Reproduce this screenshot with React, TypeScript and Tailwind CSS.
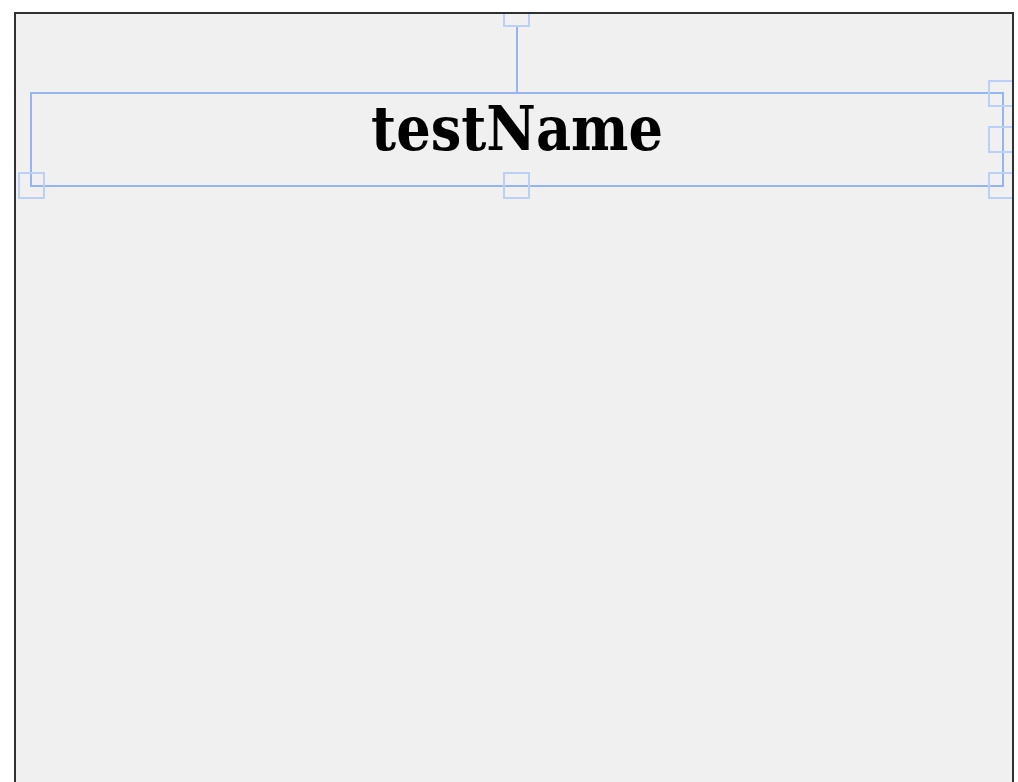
/* App.tsx — canvas with a selected heading */

const handle = 'w-[27px] h-[27px] border-2 border-[#bccff7]';

export default function App() {
  return (
    <div className="min-h-[782px] bg-white pt-[12px] pl-[14px]">
      <div className="w-[1000px] h-[800px] overflow-hidden border-2 border-[#2e3033] bg-[#f0f0f0]">
        <div className="relative ml-[14px] mt-[78px] w-[974px] h-[95px] flex justify-center">
          <h1
            className="mt-[1px] text-[61px] leading-[72px] font-bold text-black scale-x-[0.89]"
            style={{ fontFamily: '"DejaVu Serif", serif' }}
          >
            testName
          </h1>

          {/* selection outline */}
          <div className="absolute inset-0 border-2 border-[#94b4f6]" />

          {/* top rotate handle + stem */}
          <div className="absolute left-[473px] top-[-92px] flex flex-col items-center">
            <div className={handle} />
            <div className="w-[2px] h-[65px] bg-[#94b4f6] -mt-[27px] translate-y-[27px]" />
          </div>

          {/* bottom handles */}
          <div className="absolute left-[-12px] top-[80px] flex gap-[458px]">
            <div className={handle} />
            <div className={handle} />
          </div>

          {/* right handles */}
          <div className="absolute left-[958px] top-[-12px] flex flex-col gap-[19px]">
            <div className={handle} />
            <div className={handle} />
            <div className={handle} />
          </div>
        </div>
      </div>
    </div>
  );
}
